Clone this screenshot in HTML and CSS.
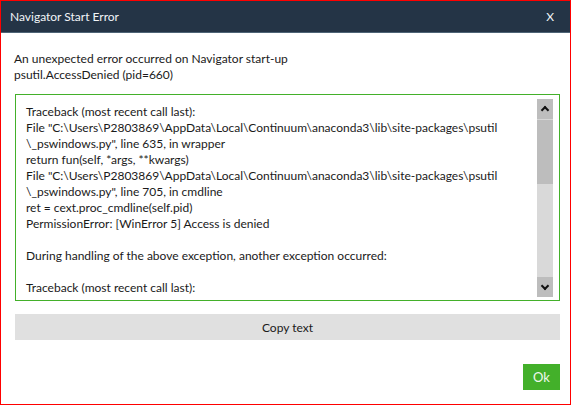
FILE: index.html
```html
<!DOCTYPE html>
<html lang="en">

<head>
    <meta charset="UTF-8">
    <title>Navigator Start Error</title>
    <link rel="stylesheet" href="styles.css">
</head>

<body>
    <div class="dialog">
        <div class="titlebar">
            <span class="title">Navigator Start Error</span>
            <span class="close">X</span>
        </div>
        <div class="content">
            <div class="message">An unexpected error occurred on Navigator start-up<br>psutil.AccessDenied (pid=660)</div>
            <div class="trace">
                <div class="trace-text">Traceback (most recent call last):
File "C:\Users\P2803869\AppData\Local\Continuum\anaconda3\lib\site-packages\psutil
\_pswindows.py", line 635, in wrapper
return fun(self, *args, **kwargs)
File "C:\Users\P2803869\AppData\Local\Continuum\anaconda3\lib\site-packages\psutil
\_pswindows.py", line 705, in cmdline
ret = cext.proc_cmdline(self.pid)
PermissionError: [WinError 5] Access is denied

During handling of the above exception, another exception occurred:

Traceback (most recent call last):</div>
                <div class="scrollbar">
                    <span class="arrow up"></span>
                    <span class="thumb"></span>
                    <span class="track"></span>
                    <span class="arrow down"></span>
                </div>
            </div>
            <div class="copy">Copy text</div>
            <div class="actions">
                <div class="ok">Ok</div>
            </div>
        </div>
    </div>
</body>

</html>
```

FILE: styles.css
```css
html,
body {
    margin: 0;
    padding: 0;
    background: #fff;
}

.dialog {
    width: 571px;
    height: 405px;
    box-sizing: border-box;
    border: 1px solid #ff0000;
    font-family: "Lato", "Liberation Sans", sans-serif;
    font-size: 12px;
    color: #1a1a1a;
    display: flex;
    flex-direction: column;
}

.titlebar {
    height: 31px;
    background: #243446;
    border-bottom: 1px solid #4e6476;
    display: flex;
    align-items: center;
    justify-content: space-between;
    padding: 0 16px 0 9px;
    color: #f2f5f8;
    font-size: 12px;
}

.content {
    padding: 18px 10px 0 13px;
    display: flex;
    flex-direction: column;
}

.message {
    line-height: 16px;
}

.trace {
    margin: 11px 0 0 1px;
    height: 205px;
    border: 1px solid #43b02a;
    display: flex;
}

.trace-text {
    flex: 1;
    padding: 9px 0 0 10px;
    line-height: 16px;
    white-space: pre;
    overflow: hidden;
}

.scrollbar {
    width: 16px;
    margin: 4px 6px 3px 0;
    display: flex;
    flex-direction: column;
    background: #d9d9d9;
}

.scrollbar .arrow {
    height: 20px;
    background: #bdbdbd;
    position: relative;
}

.scrollbar .arrow::after {
    content: "";
    position: absolute;
    left: 5px;
    width: 4px;
    height: 4px;
    border-left: 2px solid #111;
    border-top: 2px solid #111;
}

.scrollbar .up::after {
    top: 8px;
    transform: rotate(45deg);
}

.scrollbar .down::after {
    top: 6px;
    transform: rotate(225deg);
}

.thumb {
    height: 64px;
    background: #bdbdbd;
    border-top: 1px solid #d6d6d6;
}

.track {
    flex: 1;
}

.copy {
    margin: 13px 0 0 1px;
    height: 26px;
    background: #e0e0e0;
    display: flex;
    align-items: center;
    justify-content: center;
}

.actions {
    display: flex;
    justify-content: flex-end;
    margin-top: 24px;
}

.ok {
    width: 37px;
    height: 26px;
    background: #43b02a;
    color: #f0f8ee;
    display: flex;
    align-items: center;
    justify-content: center;
    font-size: 13px;
}
```
